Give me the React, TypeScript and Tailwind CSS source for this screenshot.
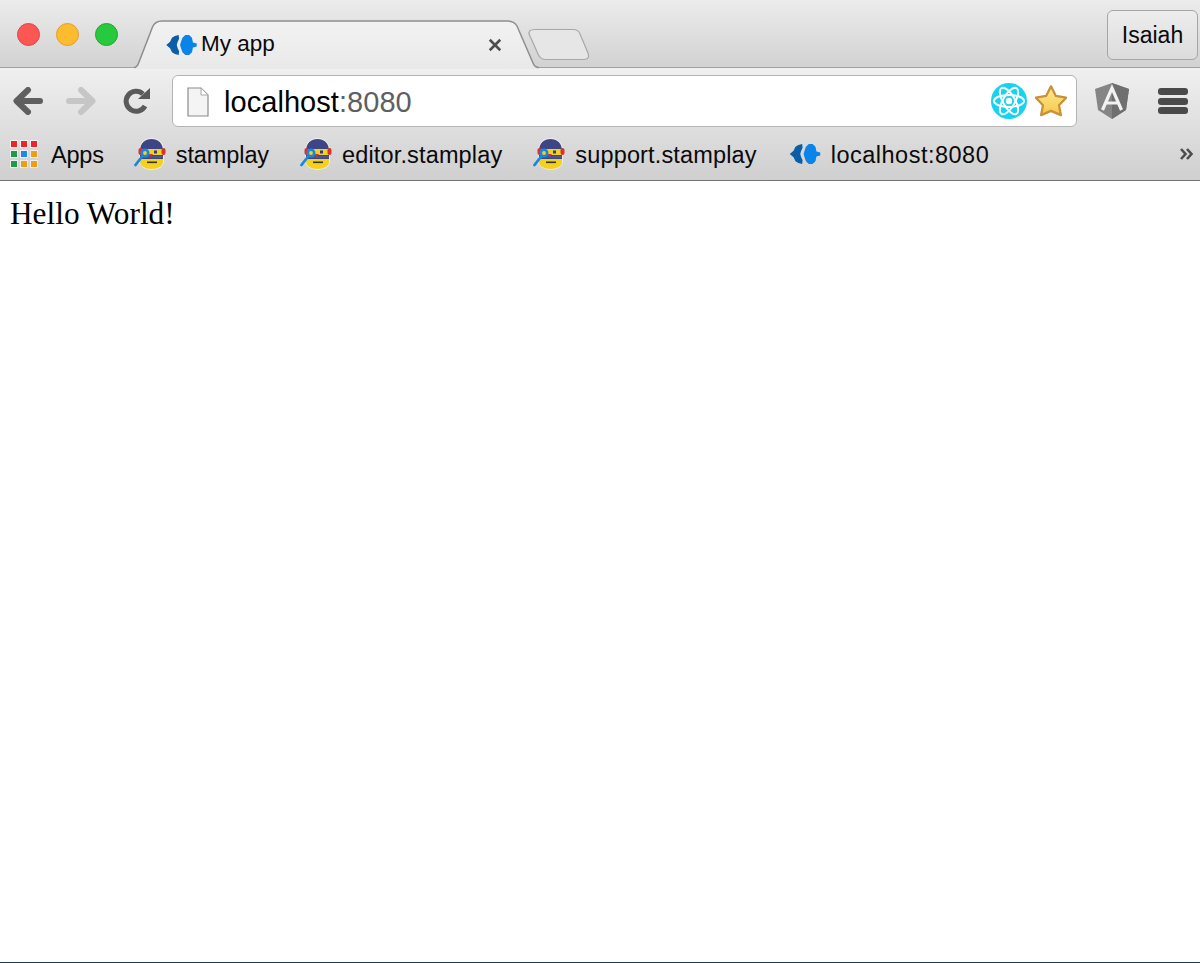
const sans = "font-['Liberation_Sans',Arial,sans-serif]";

function DevIcon({ className }: { className?: string }) {
  return (
    <svg viewBox="0 0 32 21" className={className}>
      <path d="M0 10.5 L4 7 L6 3 L9 1 L13 0 L13.5 4 L12 7 L11 10.5 L12 14 L13.5 17 L13 21 L9 20 L6 18 L4 14 Z" fill="#0a5ea8" />
      <path d="M14.5 10.5 L15.5 7 L17 3 L20 0 L24 0 L27 3 L28 8 L32 9 L32 12 L28 13 L27 18 L24 21 L20 21 L17 18 L15.5 14 Z" fill="#0a84e8" />
    </svg>
  );
}

function NinjaIcon() {
  return (
    <svg viewBox="0 0 32 32" className="w-[32px] h-[32px] shrink-0 mb-[4px]">
      <path d="M5 13 C5 4 11 0 17.5 0 C24 0 30 4 30 13 L30 23 C30 28 25 32 17.5 32 C11 32 5 28 5 23 Z" fill="#fff" opacity="0.55" />
      <path d="M6 13 C6 5 11 1 17.5 1 C24 1 29 5 29 13 L29 22 L6 22 Z" fill="#3d4585" />
      <rect x="6" y="18.5" width="23" height="1" fill="#5a62a0" />
      <path d="M6 21 L29 21 L29 24 C29 28 24 31 17.5 31 C11 31 6 28 6 24 Z" fill="#f6d11a" />
      <rect x="13" y="23.5" width="10" height="1.6" fill="#333" />
      <rect x="6" y="11" width="23" height="6" fill="#f6d11a" />
      <rect x="4.5" y="10" width="4" height="7" rx="2" fill="#d9322c" />
      <rect x="27.5" y="10" width="4" height="7" rx="2" fill="#d9322c" />
      <rect x="20" y="12.5" width="3" height="3" fill="#2a3a9a" />
      <path d="M14 16 L19 16 L16.5 19 Z" fill="#d9322c" />
      <circle cx="11" cy="15" r="3.2" fill="none" stroke="#1588e0" strokeWidth="2.6" />
      <path d="M8.5 18 L1.5 27" stroke="#1588e0" strokeWidth="2.8" strokeLinecap="round" />
    </svg>
  );
}

function AppsIcon() {
  const colors = [
    "bg-[#e8262c]", "bg-[#e8262c]", "bg-[#e8262c]",
    "bg-[#1f9a4a]", "bg-[#1f88e8]", "bg-[#f09c14]",
    "bg-[#1f9a4a]", "bg-[#f09c14]", "bg-[#f09c14]",
  ];
  return (
    <div className="grid grid-cols-3 gap-[4px] w-[26px] shrink-0 mb-[4px]">
      {colors.map((c, i) => (
        <div key={i} className={`h-[6px] w-[6px] outline outline-white/60 ${c}`} />
      ))}
    </div>
  );
}

function Bookmark({ label, icon, className, textClass }: { label: string; icon: React.ReactNode; className: string; textClass?: string }) {
  return (
    <div className={`flex items-center shrink-0 ${className}`}>
      {icon}
      <span className={`text-[23.5px] text-[#0a0a0a] leading-none ${textClass ?? ""}`}>{label}</span>
    </div>
  );
}

export default function App() {
  return (
    <div className={`h-[963px] w-full flex flex-col bg-white overflow-hidden ${sans}`}>
      {/* Title strip */}
      <div className="relative h-[67px] shrink-0 flex items-start bg-gradient-to-b from-[#ececec] to-[#d2d2d2]">
        <div className="flex items-center gap-[16px] ml-[17px] mt-[23px]">
          <div className="w-[23px] h-[23px] rounded-full bg-[#fc5753] border border-[#df4744]" />
          <div className="w-[23px] h-[23px] rounded-full bg-[#fdbc2e] border border-[#de9f34]" />
          <div className="w-[23px] h-[23px] rounded-full bg-[#27c93f] border border-[#1aab29]" />
        </div>

        {/* Active tab */}
        <div className="absolute left-[134px] top-[20px] w-[406px] h-[49px]">
          <svg viewBox="0 0 406 49" className="absolute inset-0 w-full h-full">
            <defs>
              <linearGradient id="tabFill" x1="0" y1="0" x2="0" y2="1">
                <stop offset="0" stopColor="#f2f2f2" />
                <stop offset="1" stopColor="#e9e9e9" />
              </linearGradient>
            </defs>
            <path d="M0 47.5 C3 47.5 4 45 5 42 L18.5 7 C20.5 2.5 23 1 28 1 L373 1 C378 1 381 2.5 383 6 L399 43 C400 46 402 47.5 405 47.5 L405 49 L0 49 Z" fill="url(#tabFill)" />
            <path d="M0 47.5 C3 47.5 4 45 5 42 L18.5 7 C20.5 2.5 23 1 28 1 L373 1 C378 1 381 2.5 383 6 L399 43 C400 46 402 47.5 405 47.5" fill="none" stroke="#8e8e8e" strokeWidth="1.5" />
          </svg>
          <div className="relative flex items-center h-full pl-[32px] pr-[38px]">
            <DevIcon className="w-[31px] h-[20px] shrink-0" />
            <span className="ml-[4px] text-[22.5px] text-[#0a0a0a] leading-none">My app</span>
            <svg viewBox="0 0 16 16" className="ml-auto w-[14px] h-[14px]">
              <path d="M2 2 L14 14 M14 2 L2 14" stroke="#4d4d4d" strokeWidth="3" />
            </svg>
          </div>
        </div>

        {/* New tab button */}
        <svg viewBox="0 0 64 33" className="absolute left-[527px] top-[28px] w-[64px] h-[33px]">
          <path d="M8 1.5 L46 1.5 C50 1.5 52 3 53 6 L61 25 C62.5 29 61 31.5 57 31.5 L19 31.5 C15 31.5 13 30 11.5 27 L2.5 7 C1 3.5 3 1.5 8 1.5 Z" fill="#e6e6e6" stroke="#a8a8a8" strokeWidth="1.2" />
        </svg>

        {/* Profile button */}
        <div className="absolute right-[2px] top-[10px] w-[91px] h-[50px] flex items-center justify-center pt-[1px] rounded-[6px] border border-[#a6a6a6] bg-gradient-to-b from-[#ededed] to-[#dcdcdc] text-[23px] text-[#0a0a0a]">
          Isaiah
        </div>
      </div>

      {/* Toolbar */}
      <div className="h-[63px] shrink-0 flex items-center pt-[4px] bg-gradient-to-b from-[#f0f0f0] to-[#dedede] border-t border-[#a0a0a0]">
        <svg viewBox="0 0 30 28" className="ml-[13px] w-[30px] h-[28px] shrink-0">
          <path d="M15 3 L3.5 14 L15 25 M4 14 L27 14" fill="none" stroke="#5f5f5f" strokeWidth="6" strokeLinecap="round" strokeLinejoin="round" />
        </svg>
        <svg viewBox="0 0 30 28" className="ml-[23px] w-[30px] h-[28px] shrink-0">
          <path d="M15 3 L26.5 14 L15 25 M26 14 L3 14" fill="none" stroke="#c6c6c6" strokeWidth="6" strokeLinecap="round" strokeLinejoin="round" />
        </svg>
        <svg viewBox="0 0 30 30" className="ml-[26px] w-[30px] h-[30px] shrink-0">
          <path d="M23 20 A10 10 0 1 1 21 8" fill="none" stroke="#5a5a5a" strokeWidth="5" />
          <path d="M16 13 L28 13 L28 2 Z" fill="#5a5a5a" />
        </svg>

        {/* Address bar */}
        <div className="ml-[20px] w-[905px] h-[52px] flex items-center rounded-[6px] bg-white border border-[#b4b4b4]">
          <svg viewBox="0 0 22 30" className="ml-[14px] w-[22px] h-[30px] shrink-0 mt-[2px]">
            <path d="M1 1 L14 1 L21 8 L21 29 L1 29 Z" fill="#f4f4f4" stroke="#8c8c8c" strokeWidth="1.2" />
            <path d="M14 1 L14 8 L21 8 Z" fill="#fff" stroke="#a8a8a8" strokeWidth="1" />
          </svg>
          <span className="ml-[15px] mt-[2px] text-[29px] tracking-[0.05px] leading-none text-black">
            localhost<span className="text-[#5f5f5f]">:8080</span>
          </span>
          <svg viewBox="0 0 36 36" className="ml-auto w-[36px] h-[36px] shrink-0">
            <circle cx="18" cy="18" r="18" fill="#16d3f2" />
            <g fill="none" stroke="#fff" strokeWidth="2">
              <ellipse cx="18" cy="18" rx="15" ry="6" />
              <ellipse cx="18" cy="18" rx="15" ry="6" transform="rotate(60 18 18)" />
              <ellipse cx="18" cy="18" rx="15" ry="6" transform="rotate(120 18 18)" />
            </g>
            <circle cx="18" cy="18" r="3.2" fill="#fff" />
          </svg>
          <svg viewBox="0 0 36 36" className="ml-[7px] mr-[8px] w-[34px] h-[34px] shrink-0">
            <defs>
              <linearGradient id="starFill" x1="0" y1="0" x2="0" y2="1">
                <stop offset="0" stopColor="#fdeb94" />
                <stop offset="1" stopColor="#f8c748" />
              </linearGradient>
            </defs>
            <path d="M18 2.5 L23 12.5 L34 14.5 L26.5 22.5 L28.5 33 L18 28.5 L7.5 33 L9.5 22.5 L2 14.5 L13 12.5 Z" fill="url(#starFill)" stroke="#c8913a" strokeWidth="2.4" strokeLinejoin="round" />
          </svg>
        </div>

        <svg viewBox="0 0 34 36" className="ml-[18px] w-[34px] h-[36px] shrink-0">
          <path d="M17 0 L34 6 L31 27 L17 36 L3 27 L0 6 Z" fill="#858585" />
          <path d="M17 0 L34 6 L31 27 L17 36 Z" fill="#6f6f6f" />
          <path d="M7.5 27 L17 5 L26.5 27 M11 20 L23 20" fill="none" stroke="#f2f2f2" strokeWidth="3.2" />
        </svg>
        <div className="ml-[29px] flex flex-col gap-[2.5px] shrink-0">
          <div className="w-[30px] h-[7px] rounded-[3px] bg-[#4a4a4a]" />
          <div className="w-[30px] h-[7px] rounded-[3px] bg-[#4a4a4a]" />
          <div className="w-[30px] h-[7px] rounded-[3px] bg-[#4a4a4a]" />
        </div>
      </div>

      {/* Bookmarks bar */}
      <div className="relative h-[51px] shrink-0 flex items-center pt-[1px] bg-gradient-to-b from-[#dedede] to-[#cfcfcf] border-b border-[#757575]">
        <Bookmark label="Apps" icon={<AppsIcon />} className="ml-[11px] gap-[14px]" textClass="tracking-[-0.2px]" />
        <Bookmark label="stamplay" icon={<NinjaIcon />} className="ml-[30px] gap-[10px]" textClass="tracking-[-0.1px]" />
        <Bookmark label="editor.stamplay" icon={<NinjaIcon />} className="ml-[31px] gap-[10px]" textClass="tracking-[0.15px]" />
        <Bookmark label="support.stamplay" icon={<NinjaIcon />} className="ml-[31px] gap-[10px]" textClass="tracking-[0.15px]" />
        <Bookmark label="localhost:8080" icon={<DevIcon className="w-[32px] h-[20px] shrink-0 mb-[4px]" />} className="ml-[32px] gap-[10px]" textClass="tracking-[0.5px]" />
        <svg viewBox="0 0 14 14" className="ml-auto mr-[7px] mb-[3px] w-[14px] h-[14px]">
          <path d="M2 2 L6.5 7 L2 12 M8 2 L12.5 7 L8 12" fill="none" stroke="#4d4d4d" strokeWidth="2.6" />
        </svg>
      </div>

      {/* Page content */}
      <div className="flex-1 px-[10px] pt-[14px] font-['Liberation_Serif',serif] text-[31.3px] leading-[37px] text-black">
        Hello World!
      </div>
      <div className="h-[1px] shrink-0 bg-[#1c3a50]" />
    </div>
  );
}
